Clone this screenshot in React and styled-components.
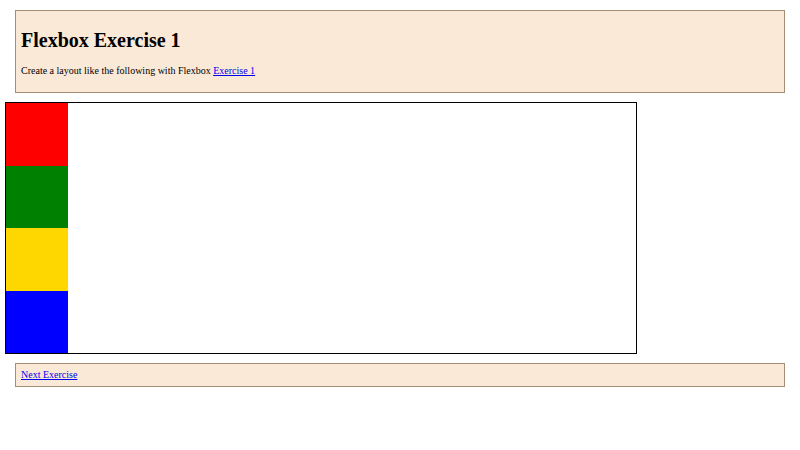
import React from "react";
import styled, { createGlobalStyle } from "styled-components";

const GlobalStyle = createGlobalStyle`
  body {
    margin: 0;
    font-family: "Liberation Serif", "Times New Roman", serif;
    background: #fff;
    color: #000;
  }
`;

const Page = styled.div`
  display: flex;
  flex-direction: column;
  align-items: flex-start;
  padding: 5px;
`;

const Panel = styled.div`
  align-self: stretch;
  margin: ${(props) => (props.footer ? "9px 10px 0" : "5px 10px 9px")};
  padding: 5px;
  background-color: #fbe9d7;
  border: 1px solid #a58e76;
  font-size: 10px;
  line-height: 12px;
`;

const Title = styled.h1`
  font-size: 20px;
  line-height: 23px;
  font-weight: 700;
  margin: 13px 0 13px;
`;

const Text = styled.p`
  margin: 0 0 10px;
  font-size: 10px;
  line-height: 12px;
`;

const Link = styled.a`
  color: #0000ee;
  text-decoration: underline;
`;

const Container = styled.div`
  display: flex;
  flex-direction: column;
  width: 630px;
  height: 250px;
  border: 1px solid #000;
`;

const Box = styled.div`
  width: 62px;
  height: 62.5px;
  background-color: ${(props) => props.color};
`;

export default function App() {
  return (
    <>
      <GlobalStyle />
      <Page>
        <Panel>
          <Title>Flexbox Exercise 1</Title>
          <Text>
            Create a layout like the following with Flexbox <Link href="#">Exercise 1</Link>
          </Text>
        </Panel>
        <Container>
          <Box color="red" />
          <Box color="green" />
          <Box color="gold" />
          <Box color="blue" />
        </Container>
        <Panel footer>
          <Link href="#">Next Exercise</Link>
        </Panel>
      </Page>
    </>
  );
}
